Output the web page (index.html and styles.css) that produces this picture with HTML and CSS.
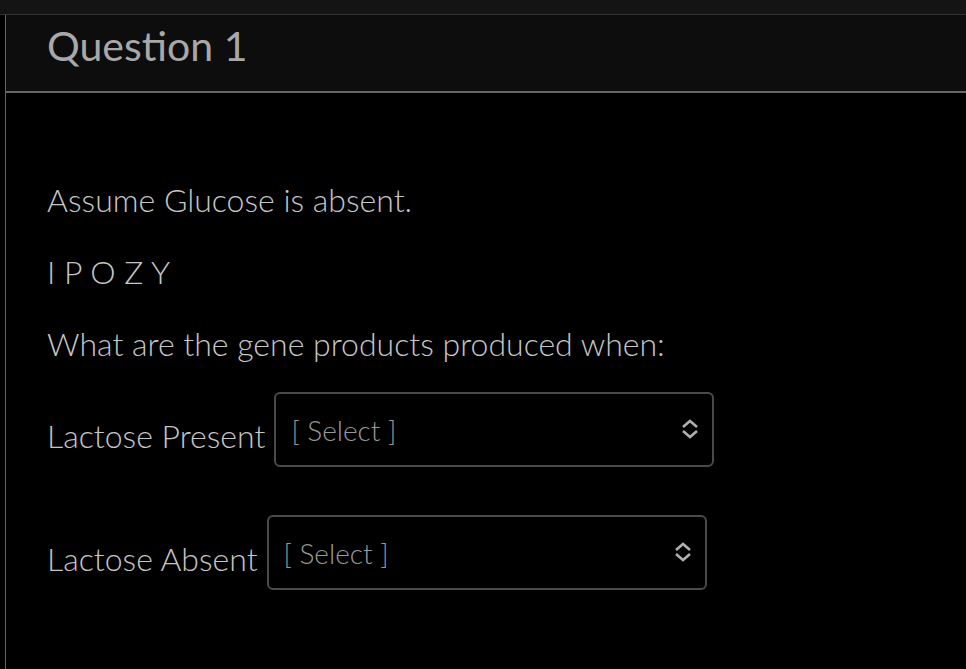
FILE: index.html
```html
<!DOCTYPE html>
<html>
<head>
    <meta charset="UTF-8">
    <meta name="viewport" content="width=device-width, initial-scale=1.0">
    <title>Question 1</title>
    <link rel="stylesheet" href="styles.css">
</head>
<body>
    <div class="topbar"></div>
    <div class="question">
        <div class="question-header">
            <h2>Question 1</h2>
        </div>
        <div class="question-body">
            <p>Assume Glucose is absent.</p>
            <p>I P O Z Y</p>
            <p>What are the gene products produced when:</p>

            <div class="answer-row">
                <label for="present">Lactose Present</label>
                <div class="select-wrap">
                    <select id="present">
                        <option>[ Select ]</option>
                    </select>
                    <svg class="chevron" width="18" height="20" viewBox="0 0 18 20">
                        <path d="M2 8 L9 2 L16 8 M2 12 L9 18 L16 12" fill="none" stroke="#b0b0b0" stroke-width="2.6"/>
                    </svg>
                </div>
            </div>

            <div class="answer-row">
                <label for="absent">Lactose Absent</label>
                <div class="select-wrap">
                    <select id="absent">
                        <option>[ Select ]</option>
                    </select>
                    <svg class="chevron" width="18" height="20" viewBox="0 0 18 20">
                        <path d="M2 8 L9 2 L16 8 M2 12 L9 18 L16 12" fill="none" stroke="#b0b0b0" stroke-width="2.6"/>
                    </svg>
                </div>
            </div>
        </div>
    </div>
</body>
</html>
```

FILE: styles.css
```css
body {
    margin: 0;
    background: #000;
    font-family: "Lato Light", Lato, "Open Sans", sans-serif;
    color: #c6c6c6;
    height: 669px;
    overflow: hidden;
}
.topbar {
    height: 14px;
    background: #141414;
    border-bottom: 1px solid #333;
}
.question {
    margin-left: 5px;
    border-left: 1px solid #666;
    height: 100%;
}
.question-header {
    height: 76px;
    background: #0d0d0d;
    border-bottom: 2px solid #666;
    padding-left: 41px;
}
.question-header h2 {
    margin: 0;
    font-family: Lato, "Open Sans", sans-serif;
    font-size: 41px;
    font-weight: 400;
    line-height: 62px;
    color: #a8a8a8;
}
.question-body {
    padding: 85px 0 0 41px;
}
.question-body p {
    margin: 0 0 28px;
    font-size: 32px;
    font-weight: 300;
    line-height: 44px;
}
.answer-row {
    display: flex;
    align-items: flex-start;
    gap: 9px;
    margin-top: -2px;
    margin-bottom: 50px;
}
.answer-row label {
    font-size: 32px;
    font-weight: 300;
    line-height: 44px;
    margin-top: 22px;
}
.select-wrap {
    position: relative;
    width: 440px;
}
.select-wrap select {
    display: block;
    appearance: none;
    -webkit-appearance: none;
    box-sizing: border-box;
    width: 100%;
    height: 75px;
    padding: 0 40px 0 15px;
    background: #000;
    border: 2px solid #4a4a4a;
    border-radius: 6px;
    color: #9a9a9a;
    font-family: "Lato Light", Lato, "Open Sans", sans-serif;
    font-size: 28px;
    font-weight: 300;
}
.chevron {
    position: absolute;
    right: 15px;
    top: 27px;
}
```
